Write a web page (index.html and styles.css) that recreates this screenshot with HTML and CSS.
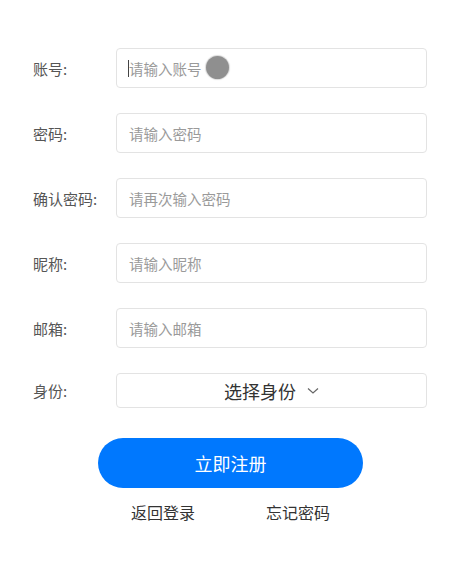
FILE: index.html
```html
<!DOCTYPE html>
<html>
<head>
    <title>注册</title>
    <link rel="stylesheet" href="styles.css">
</head>
<body>
    <main class="register">
        <form class="register-form">
            <div class="form-row">
                <label class="form-label">账号:</label>
                <div class="input-box">
                    <span class="caret"></span>
                    <span class="placeholder">请输入账号</span>
                    <span class="cursor-dot"></span>
                </div>
            </div>
            <div class="form-row">
                <label class="form-label">密码:</label>
                <div class="input-box"><span class="placeholder">请输入密码</span></div>
            </div>
            <div class="form-row">
                <label class="form-label">确认密码:</label>
                <div class="input-box"><span class="placeholder">请再次输入密码</span></div>
            </div>
            <div class="form-row">
                <label class="form-label">昵称:</label>
                <div class="input-box"><span class="placeholder">请输入昵称</span></div>
            </div>
            <div class="form-row">
                <label class="form-label">邮箱:</label>
                <div class="input-box"><span class="placeholder">请输入邮箱</span></div>
            </div>
            <div class="form-row">
                <label class="form-label">身份:</label>
                <div class="select-box">
                    <span>选择身份</span>
                    <svg class="chevron" width="12" height="8" viewBox="0 0 12 8">
                        <path d="M1 1.5 L6 6 L11 1.5" fill="none" stroke="#666" stroke-width="1.2"/>
                    </svg>
                </div>
            </div>
        </form>
        <button class="submit-button" type="button">立即注册</button>
        <div class="links">
            <a href="#">返回登录</a>
            <a href="#">忘记密码</a>
        </div>
    </main>
</body>
</html>
```

FILE: styles.css
```css
body {
    margin: 0;
    background-color: #fff;
    font-family: "Noto Sans CJK SC", "Liberation Sans", sans-serif;
    color: #333;
}
.register {
    padding-top: 48px;
}
.register-form {
    display: flex;
    flex-direction: column;
    gap: 25px;
    padding-left: 33px;
}
.form-row {
    display: flex;
    align-items: center;
}
.form-label {
    width: 83px;
    font-size: 15px;
    color: #555;
}
.input-box {
    position: relative;
    display: flex;
    align-items: center;
    box-sizing: border-box;
    width: 311px;
    height: 40px;
    padding-left: 12px;
    border: 1px solid #e3e3e3;
    border-radius: 4px;
}
.placeholder {
    font-size: 14.5px;
    color: #9a9a9a;
}
.caret {
    position: absolute;
    left: 11px;
    top: 11px;
    width: 1px;
    height: 17px;
    background-color: #444;
}
.cursor-dot {
    position: absolute;
    left: 89px;
    top: 7px;
    width: 23px;
    height: 23px;
    border-radius: 50%;
    background-color: #8f8f8f;
    box-shadow: 0 0 1px 1px rgba(0, 0, 0, 0.15);
}
.select-box {
    display: flex;
    align-items: center;
    justify-content: center;
    gap: 11px;
    box-sizing: border-box;
    width: 311px;
    height: 35px;
    border: 1px solid #e3e3e3;
    border-radius: 4px;
    font-size: 18px;
    color: #333;
}
.chevron {
    margin-top: 1px;
}
.submit-button {
    display: block;
    width: 265px;
    height: 50px;
    margin: 30px auto 0;
    border: none;
    border-radius: 25px;
    background-color: #0078fe;
    color: #fff;
    font-family: inherit;
    font-size: 18px;
    cursor: pointer;
}
.links {
    display: flex;
    justify-content: center;
    gap: 71px;
    margin-top: 12px;
}
.links a {
    font-size: 16px;
    color: #333;
    text-decoration: none;
}
```
